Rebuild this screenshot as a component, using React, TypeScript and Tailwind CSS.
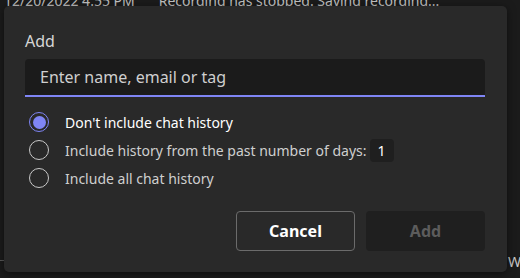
import { useState } from 'react';

const font = { fontFamily: '"Noto Sans", "Open Sans", sans-serif' };

function Radio({ checked }: { checked: boolean }) {
    return checked ? (
        <span className="flex h-[20px] w-[20px] shrink-0 items-center justify-center rounded-full border-[1.5px] border-[#7f85f5]">
            <span className="h-[13px] w-[13px] rounded-full bg-[#7f85f5]" />
        </span>
    ) : (
        <span className="h-[20px] w-[20px] shrink-0 rounded-full border-[1.5px] border-[#c8c8c8]" />
    );
}

export default function App() {
    const [choice, setChoice] = useState(0);

    const options = [
        { label: "Don't include chat history" },
        { label: 'Include history from the past number of days:', days: '1' },
        { label: 'Include all chat history' },
    ];

    return (
        <div className="relative h-[278px] w-[520px] overflow-hidden bg-[#1b1b1b]" style={font}>
            {/* chat behind the dialog */}
            <div className="-mt-[10px] flex gap-[24px] pl-[4px] text-[14px] text-[#c0c0c0]">
                <span>12/20/2022 4:55 PM</span>
                <span>Recording has stopped. Saving recording...</span>
            </div>
            <div className="absolute left-0 top-[260px] h-px w-[5px] bg-[#5a5a5a]" />
            <div className="absolute left-[508px] top-[251px] text-[14px] text-[#c8c8c8]">We</div>

            {/* dialog */}
            <div className="absolute left-[4px] top-[6px] flex h-[266px] w-[503px] flex-col rounded-[5px] bg-[#292929] px-[21px] pt-[24px] shadow-[0_2px_8px_rgba(0,0,0,0.5)]">
                <h2 className="text-[16px] leading-[22px] text-[#d6d6d6]">Add</h2>

                <div className="mt-[7px] flex h-[38px] w-[460px] items-center rounded-t-[4px] border-b-2 border-[#7f85f5] bg-[#1b1b1b] px-[15px]">
                    <span className="text-[16px] text-[#cfcfcf]">Enter name, email or tag</span>
                </div>

                <div className="mt-[11px] flex flex-col">
                    {options.map((o, i) => (
                        <div
                            key={o.label}
                            onClick={() => setChoice(i)}
                            className="flex h-[28px] cursor-pointer items-center gap-[16px] pl-[4px]"
                        >
                            <Radio checked={choice === i} />
                            <span className={`text-[14px] ${choice === i ? 'text-white' : 'text-[#cfcfcf]'}`}>
                                {o.label}
                            </span>
                            {o.days && (
                                <span className="-ml-[13px] flex h-[23px] w-[24px] items-center justify-center rounded-[4px] bg-[#1f1f1f] text-[14px] text-white">
                                    {o.days}
                                </span>
                            )}
                        </div>
                    ))}
                </div>

                <div className="mt-auto mb-[21px] flex justify-end gap-[11px] pr-[1px]">
                    <button className="h-[40px] w-[119px] rounded-[4px] border border-[#6b6b6b] bg-[#292929] text-[16px] font-bold text-white">
                        Cancel
                    </button>
                    <button className="h-[40px] w-[119px] rounded-[4px] bg-[#1f1f1f] text-[16px] font-bold text-[#5c5c5c]">
                        Add
                    </button>
                </div>
            </div>
        </div>
    );
}
